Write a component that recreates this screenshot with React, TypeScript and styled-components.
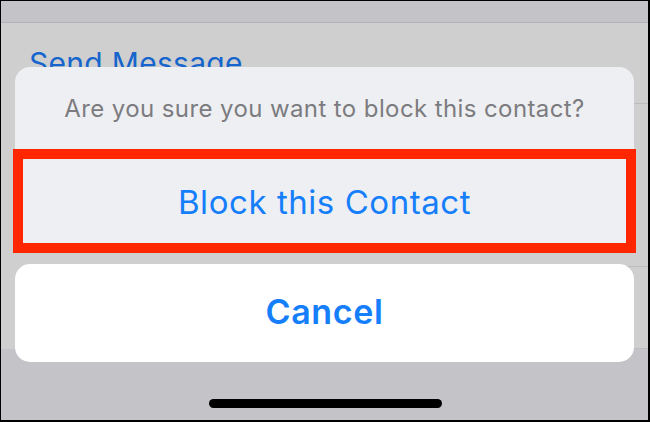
import React from "react";
import styled, { createGlobalStyle } from "styled-components";

const Global = createGlobalStyle`
  html, body { margin: 0; padding: 0; background: #000; }
  body { font-family: Inter, "Liberation Sans", sans-serif; }
  * { box-sizing: border-box; }
`;

const Screen = styled.div`
  position: relative;
  width: 650px;
  height: 422px;
  overflow: hidden;
  border-style: solid;
  border-color: #000;
  border-width: 1px 2px 2px 1px;
  background: #c4c3c8;
  display: flex;
  flex-direction: column;
`;

const TopBar = styled.div`
  height: 22px;
  flex: none;
  background: #c4c3c8;
  border-bottom: 1px solid #b3b2b7;
`;

const Row = styled.div<{ $h: number }>`
  height: ${(p) => p.$h}px;
  flex: none;
  background: #cfcfcf;
  padding-left: 28px;
  display: flex;
  align-items: flex-start;
  position: relative;
  &::after {
    content: "";
    position: absolute;
    left: 28px;
    right: 0;
    bottom: 0;
    height: 1px;
    background: #bdbdbf;
  }
`;

const RowLabel = styled.span`
  margin-top: 22px;
  font-size: 30px;
  color: #1665cd;
  letter-spacing: 0.3px;
`;

const Sheet = styled.div`
  position: absolute;
  left: 14px;
  right: 14px;
  top: 66px;
  display: flex;
  flex-direction: column;
  gap: 11px;
`;

const Group = styled.div`
  position: relative;
  background: #eeeff2;
  border-radius: 15px;
  display: flex;
  flex-direction: column;
`;

const Title = styled.div`
  height: 84px;
  display: flex;
  align-items: center;
  justify-content: center;
  font-size: 24px;
  color: #7c7c80;
  letter-spacing: 0.4px;
  padding-bottom: 2px;
`;

const Action = styled.div<{ $bold?: boolean }>`
  height: ${(p) => (p.$bold ? 98 : 102)}px;
  display: flex;
  align-items: center;
  justify-content: center;
  font-size: ${(p) => (p.$bold ? 34 : 33)}px;
  font-weight: ${(p) => (p.$bold ? 600 : 400)};
  color: #157efb;
  letter-spacing: ${(p) => (p.$bold ? 0.6 : 0.55)}px;
  padding-bottom: ${(p) => (p.$bold ? 3 : 0)}px;
`;

const CancelCard = styled.div`
  background: #ffffff;
  border-radius: 15px;
`;

const Highlight = styled.div`
  position: absolute;
  left: -2px;
  right: -2px;
  top: 82px;
  height: 104px;
  border: 10px solid #ff2600;
  pointer-events: none;
`;

const HomeIndicator = styled.div`
  position: absolute;
  left: 208px;
  top: 398px;
  width: 233px;
  height: 9px;
  border-radius: 5px;
  background: #000;
`;

export default function App() {
  return (
    <>
      <Global />
      <Screen>
        <TopBar />
        <Row $h={81}>
          <RowLabel>Send Message</RowLabel>
        </Row>
        <Row $h={163} />
        <Row $h={82} />
        <Sheet>
          <Group>
            <Title>Are you sure you want to block this contact?</Title>
            <Action>Block this Contact</Action>
            <Highlight />
          </Group>
          <CancelCard>
            <Action $bold>Cancel</Action>
          </CancelCard>
        </Sheet>
        <HomeIndicator />
      </Screen>
    </>
  );
}
